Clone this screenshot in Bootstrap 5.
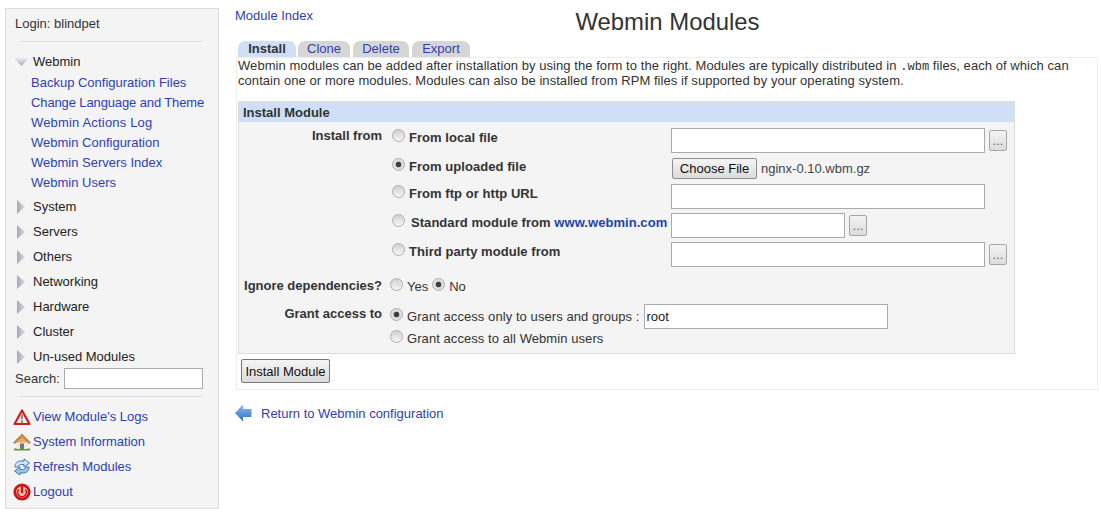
<!DOCTYPE html>
<html lang="en"><head><meta charset="utf-8"><title>Webmin Modules</title>
<link rel="stylesheet" href="https://cdn.jsdelivr.net/npm/bootstrap@5.3.0/dist/css/bootstrap.min.css">
<style>
html,body{height:100%}
body{font-family:"Liberation Sans",Arial,sans-serif;font-size:13px;line-height:15px;color:#333;background:#fff;overflow:hidden}
a{color:#2f3fb0;text-decoration:none}
.shell{height:515px;padding:8px 3px 0 5px}
.side{width:214px;height:501px;flex:none;background:#f4f4f4;border:1px solid #dedede;padding:7px 15px 0 8px}
.side-login{height:15px;padding-left:1px}
.side-rule{border-top:1px solid #ddd;margin:10px 0 0 6px;width:182px}
.rule-low{margin-top:7px}
.cat{height:25px;display:flex;align-items:center;color:#222}
.cat svg{flex:none;margin-right:1px}
.cat-open{margin-top:7px;margin-right:-1px}
.cat-open svg{margin-right:3px}
.cat-links{margin-top:-1px;margin-bottom:1px}
.cat-links a{display:block;height:20px;line-height:20px;padding-left:17px;white-space:nowrap}
.cat-links a.ls-tight{letter-spacing:-.12px}
.cat-links a.ls-wide{letter-spacing:.17px}
.search-row{height:22px;padding-left:1px;margin-top:-2px}
.search-row input{width:139px;height:21px;margin-left:4px;border:1px solid #aaa;background:#fff;padding:0 2px;font:inherit}
.act{height:25px;display:flex;align-items:center}
.act svg{flex:none;width:18px;height:18px;margin-left:-1px;margin-right:2px}
.acts{margin-top:7px}
.main-pane{flex:1;margin-left:16px;min-width:0;position:relative}
.top-row{height:33px;position:relative}
.mod-index{display:block;line-height:15px}
.page-title{position:absolute;left:0;right:-2px;top:0;text-align:center;font-size:23.9px;line-height:27px;font-weight:400;color:#333;margin:0}
.tabbar{padding-left:3px;gap:2px;height:16px}
.tabbar a{display:block;height:16px;line-height:16px;background:#d6d6d6;border-radius:7px 7px 0 0;text-align:center;margin-right:1px}
.tabbar a.tab-on{background:#cfdff8;font-weight:700;color:#333;margin-right:0}
.outer-box{margin-left:1px;width:862px;height:333px;border:1px solid #eee;padding:0 0 0 1px}
.intro{margin:0;line-height:15px;height:43px;letter-spacing:.06px}
code.wbm{font-family:"Liberation Mono",monospace;font-size:12px;color:#333;line-height:0}
.form-box{width:777px;height:253px;background:#f4f4f4;border:1px solid #ddd;border-top-width:2px}
.form-head{height:19px;line-height:19px;background:#cfdff8;font-weight:700;padding-left:4px}
.form-row{display:flex}
.lbl{width:143px;flex:none;text-align:right;font-weight:700;white-space:nowrap}
.opt-label{font-weight:700;letter-spacing:.05px;white-space:nowrap}
input.rdo{appearance:none;-webkit-appearance:none;width:13px;height:13px;margin:0;flex:none;border:1px solid #aeaeae;border-radius:50%;background:linear-gradient(#d2d2d2,#f6f6f6)}
input.rdo:checked{background:radial-gradient(circle,#3d3d3d 0 2.4px,#d8d8d8 3.2px,#efefef)}
.txt{border:1px solid #aaa;background:#fff;height:25px;padding:0 2px;font:inherit;color:#222;display:block}
.t-long{width:314px}.t-short{width:174px}
.dots{width:18px;height:21px;padding:0;border:1px solid #a5a5a5;border-radius:2px;background:linear-gradient(#f3f3f3,#dcdcdc);font:inherit;line-height:15px;color:#666;margin:2px 0 0 4px}
.choose{width:85px;height:21px;padding:0;margin-left:1px;border:1px solid #8e8e8e;border-radius:2px;background:linear-gradient(#f5f5f5,#dbdbdb);font:inherit;line-height:15px;color:#111}
.src-rows{padding-top:6px}
.src-row{display:flex;align-items:flex-start;height:29px}
.opts{width:289px;flex:none;padding:2px 0 0 10px;display:flex;align-items:flex-start;gap:4px}
.opts input.rdo{margin-top:-1px}
.gap-std{gap:6px}
.tight{padding-top:1px}
.file-name{margin-left:4px;margin-top:3px;color:#444}
.row-file{height:26px}
.row-first{height:30px}
.dep-row{margin-top:7px;height:25px}
.plain-opts{padding-left:8px;display:flex;align-items:center;gap:4px}
.plain-opts input.rdo{margin-bottom:4px}
.no-radio{margin-left:1px}
.line-one{height:26px}
.line-two{height:17px;margin-top:1px}
.spaced{letter-spacing:.07px}
.root-input{width:244px}
.inst-btn{display:block;margin:5px 0 0 3px;width:89px;height:24px;padding:0;border:1px solid #777;border-radius:2px;background:linear-gradient(#f5f5f5,#dbdbdb);font:inherit;color:#111}
.back-row{margin-top:14px;height:18px}
.back-row svg{margin-right:9px}
</style></head>
<body>
<svg width="0" height="0" class="d-block"><defs>
<linearGradient id="tg" x1="0" y1="0" x2="0" y2="1"><stop offset="0" stop-color="#eceef3"/><stop offset="1" stop-color="#a4a7b6"/></linearGradient>
<linearGradient id="tr" x1="0" y1="0" x2="1" y2="0"><stop offset="0" stop-color="#a4a7b7"/><stop offset="1" stop-color="#d9dbe2"/></linearGradient>
<linearGradient id="ag" x1="0" y1="0" x2="0" y2="1"><stop offset="0" stop-color="#8fbdea"/><stop offset="1" stop-color="#2a6ec2"/></linearGradient>
<symbol id="tri" viewBox="0 0 18 14"><path d="M3 0l8 7-8 7z" fill="url(#tr)"/></symbol>
</defs></svg>
<div class="shell d-flex">
<aside class="side">
  <div class="side-login">Login: blindpet</div>
  <div class="side-rule"></div>
  <div class="cat cat-open"><svg width="16" height="10" viewBox="0 0 16 10"><path d="M0 1h15L7.500 9z" fill="url(#tg)"/></svg><span>Webmin</span></div>
  <div class="cat-links">
    <a href="#">Backup Configuration Files</a>
    <a class="ls-tight" href="#">Change Language and Theme</a>
    <a class="ls-wide" href="#">Webmin Actions Log</a>
    <a href="#">Webmin Configuration</a>
    <a href="#">Webmin Servers Index</a>
    <a href="#">Webmin Users</a>
  </div>
  <div class="cat"><svg width="18" height="14"><use href="#tri"/></svg><span>System</span></div>
  <div class="cat"><svg width="18" height="14"><use href="#tri"/></svg><span>Servers</span></div>
  <div class="cat"><svg width="18" height="14"><use href="#tri"/></svg><span>Others</span></div>
  <div class="cat"><svg width="18" height="14"><use href="#tri"/></svg><span>Networking</span></div>
  <div class="cat"><svg width="18" height="14"><use href="#tri"/></svg><span>Hardware</span></div>
  <div class="cat"><svg width="18" height="14"><use href="#tri"/></svg><span>Cluster</span></div>
  <div class="cat"><svg width="18" height="14"><use href="#tri"/></svg><span>Un-used Modules</span></div>
  <div class="search-row d-flex align-items-center"><span>Search:</span><input type="text" aria-label="Search"></div>
  <div class="side-rule rule-low"></div>
  <div class="acts">
    <div class="act"><svg viewBox="0 0 18 18"><path d="M9 2.500L1.500 16h15z" fill="#f6ece6" stroke="#cc1f1f" stroke-width="2.200" stroke-linejoin="round"/><path d="M7.800 6.500h2.400l-.4 5H8.200zM8 12.500h2V15H8z" fill="#8f8481"/></svg><a href="#">View Module's Logs</a></div>
    <div class="act"><svg viewBox="0 0 18 18"><path d="M1 15.500h16V17.500H1z" fill="#5d9a3c"/><path d="M3.500 8h11v8h-11z" fill="#f1e8d6"/><path d="M7 10.500h4V16H7z" fill="#75777a"/><path d="M.5 9.500L9 1l8.500 8.500-1.500 1L9 4.500 2 10.500z" fill="#c98d45" stroke="#a96f2c" stroke-width=".6" stroke-linejoin="round"/><path d="M9 4.500L3.500 9.500h11z" fill="#dcae74"/></svg><a href="#">System Information</a></div>
    <div class="act"><svg viewBox="0 0 18 18"><path d="M2 9C2 5 4.500 3 8 3h3V1l5.500 4L11 9V6.500H8.500C6.500 6.500 5.500 7.500 5.500 9z" fill="#d6e6f5" stroke="#3a78b8"/><path d="M16 9c0 4-2.500 6-6 6H7v2l-5.500-4L7 9v2.500h2.500c2 0 3-1 3-2.500z" fill="#9cc3e6" stroke="#3a78b8"/></svg><a href="#">Refresh Modules</a></div>
    <div class="act"><svg viewBox="0 0 18 18"><circle cx="9" cy="9" r="7.200" fill="#f6c0b8" stroke="#cf1414" stroke-width="2.800"/><path d="M5.800 6.500a4.300 4.300 0 1 0 6.400 0" fill="none" stroke="#cf1414" stroke-width="1.600"/><path d="M9 4v5" stroke="#cf1414" stroke-width="2.400" stroke-linecap="round"/></svg><a href="#">Logout</a></div>
  </div>
</aside>
<main class="main-pane">
  <div class="top-row">
    <a class="mod-index" href="#">Module Index</a>
    <h1 class="page-title">Webmin Modules</h1>
  </div>
  <div class="tabbar d-flex">
    <a class="tab-on" href="#" style="width:58px">Install</a>
    <a href="#" style="width:52px">Clone</a>
    <a href="#" style="width:56px">Delete</a>
    <a href="#" style="width:58px">Export</a>
  </div>
  <div class="outer-box">
    <p class="intro">Webmin modules can be added after installation by using the form to the right. Modules are typically distributed in <code class="wbm">.wbm</code> files, each of which can<br>contain one or more modules. Modules can also be installed from RPM files if supported by your operating system.</p>
    <div class="form-box">
      <div class="form-head">Install Module</div>
      <div class="form-row">
        <div class="lbl" style="padding-top:6px">Install from</div>
        <div class="flex-grow-1 src-rows">
          <div class="src-row row-first"><div class="opts"><input class="rdo" type="radio" name="src" aria-label="local"><span class="opt-label">From local file</span></div><input class="txt t-long" type="text" aria-label="file"><button class="dots" type="button">...</button></div>
          <div class="src-row row-file"><div class="opts tight"><input class="rdo" type="radio" name="src" checked aria-label="uploaded"><span class="opt-label">From uploaded file</span></div><button class="choose" type="button">Choose File</button><span class="file-name">nginx-0.10.wbm.gz</span></div>
          <div class="src-row"><div class="opts"><input class="rdo" type="radio" name="src" aria-label="url"><span class="opt-label">From ftp or http URL</span></div><input class="txt t-long" type="text" aria-label="url"></div>
          <div class="src-row"><div class="opts gap-std"><input class="rdo" type="radio" name="src" aria-label="standard"><span class="opt-label">Standard module from <a href="#" style="color:#1b44a8">www.webmin.com</a></span></div><input class="txt t-short" type="text" aria-label="standard"><button class="dots" type="button">...</button></div>
          <div class="src-row"><div class="opts"><input class="rdo" type="radio" name="src" aria-label="third"><span class="opt-label">Third party module from</span></div><input class="txt t-long" type="text" aria-label="third"><button class="dots" type="button">...</button></div>
        </div>
      </div>
      <div class="form-row dep-row">
        <div class="lbl">Ignore dependencies?</div>
        <div class="plain-opts align-self-start"><input class="rdo" type="radio" name="dep" aria-label="yes"><span>Yes</span><input class="rdo no-radio" type="radio" name="dep" checked aria-label="no"><span>No</span></div>
      </div>
      <div class="form-row">
        <div class="lbl" style="padding-top:3px">Grant access to</div>
        <div>
          <div class="plain-opts line-one"><input class="rdo" type="radio" name="gr" checked aria-label="only"><span class="spaced">Grant access only to users and groups :</span><input class="txt root-input" type="text" value="root" aria-label="users"></div>
          <div class="plain-opts line-two"><input class="rdo" type="radio" name="gr" aria-label="all"><span class="spaced">Grant access to all Webmin users</span></div>
        </div>
      </div>
    </div>
    <button class="inst-btn" type="button">Install Module</button>
  </div>
  <div class="back-row d-flex align-items-center"><svg width="17" height="18" viewBox="0 0 17 18"><path d="M0 9L8 .5V5h8.500v8H8v4.500z" fill="url(#ag)"/></svg><a href="#">Return to Webmin configuration</a></div>
</main>
</div>
<script src="https://cdn.jsdelivr.net/npm/bootstrap@5.3.0/dist/js/bootstrap.bundle.min.js"></script>
</body></html>
